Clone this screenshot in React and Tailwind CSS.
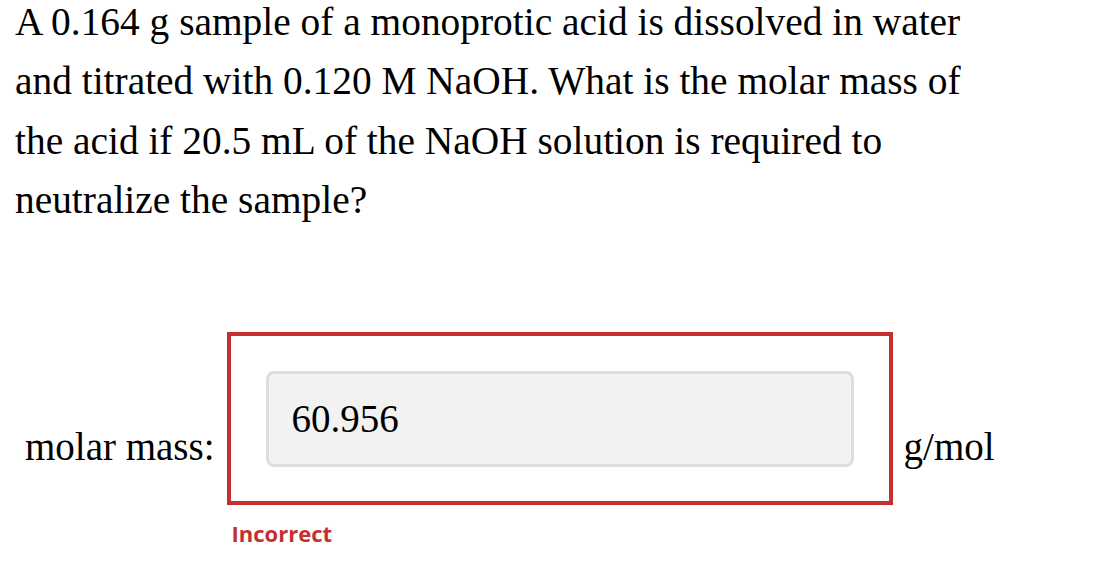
import React from "react";

const App = () => {
    return (
        <div className="min-h-screen w-[1120px] bg-white text-black overflow-hidden font-['Liberation_Serif',serif]">
            <p className="ml-[15px] -mt-[7px] w-[980px] text-[39.4px] leading-[59.3px]">
                A 0.164 g sample of a monoprotic acid is dissolved in water and titrated with 0.120 M NaOH. What is
                the molar mass of the acid if 20.5 mL of the NaOH solution is required to neutralize the sample?
            </p>

            <div className="flex items-start mt-[102px]">
                <span className="ml-[25px] mt-[95px] text-[39px] leading-none whitespace-nowrap">molar mass:</span>

                <div className="ml-[12px] flex flex-col">
                    <div className="w-[666px] h-[173px] border-4 border-[#c3302f] p-[35px]">
                        <div className="h-[96px] rounded-lg border-[3px] border-[#dddddd] bg-[#f2f2f2] flex items-center pl-[23px] text-[39px]">
                            60.956
                        </div>
                    </div>
                    <span className="ml-[5px] mt-[12px] text-[22px] font-bold text-[#c3302f] font-['Open_Sans',sans-serif]">
                        Incorrect
                    </span>
                </div>

                <span className="ml-[11px] mt-[95px] text-[39px] leading-none whitespace-nowrap">g/mol</span>
            </div>
        </div>
    );
};

export default App;
